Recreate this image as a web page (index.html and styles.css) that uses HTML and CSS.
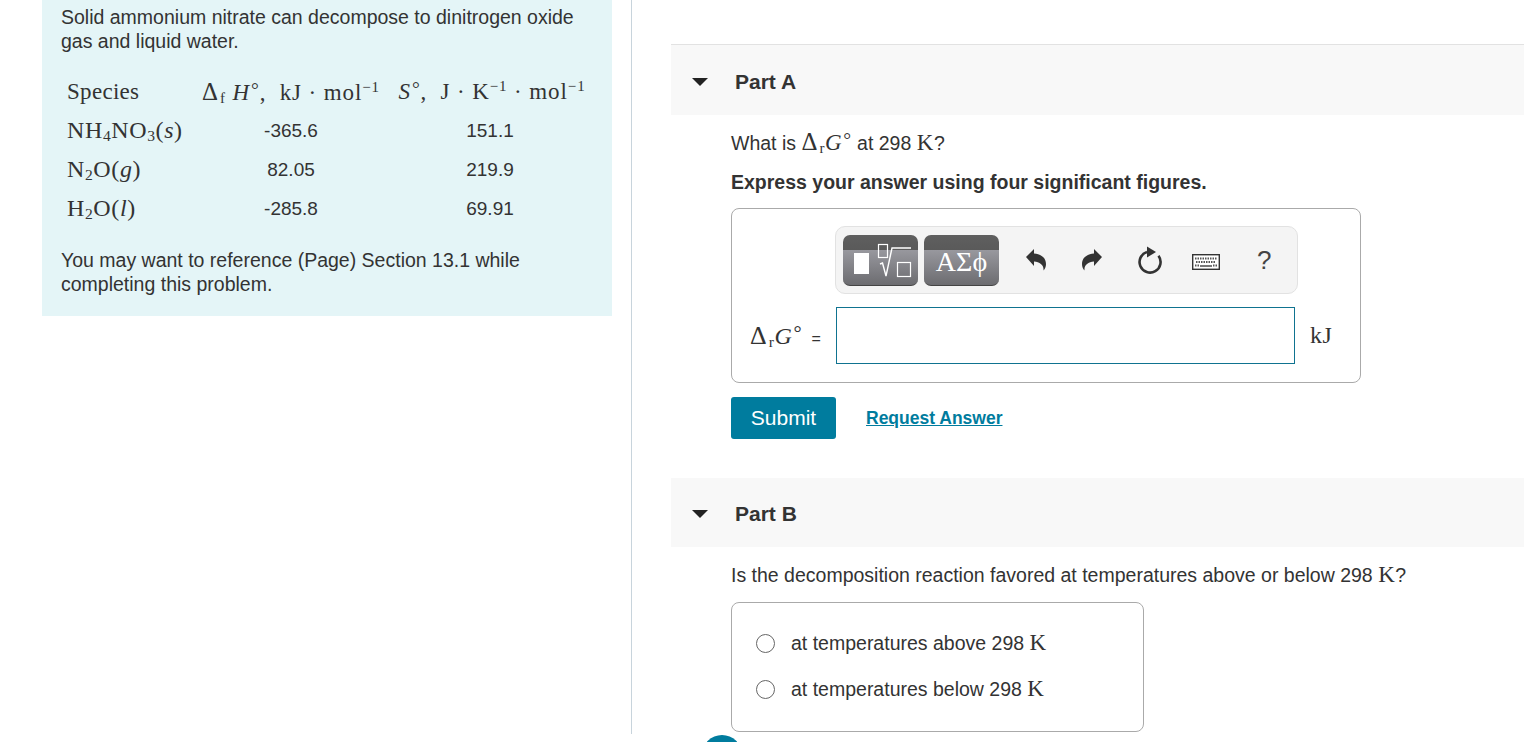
FILE: index.html
```html
<!DOCTYPE html>
<html lang="en">
  <head>
    <meta charset="UTF-8" />
    <meta name="viewport" content="width=device-width, initial-scale=1.0" />
    <title>Part A</title>
    <link rel="stylesheet" href="styles.css">
  </head>
  <body>
    <div class="page">
      <div class="left-col">
        <div class="intro">
          <p class="intro-text">Solid ammonium nitrate can decompose to dinitrogen oxide gas and liquid water.</p>
          <table class="data-table">
            <tr class="head-row">
              <th class="species math">Species</th>
              <th class="col-h math"><span class="delta">&Delta;</span><sub>f</sub> <i>H</i><sup class="deg">&deg;</sup>, &nbsp;kJ &middot; mol<sup>&minus;1</sup></th>
              <th class="col-s math"><i>S</i><sup class="deg">&deg;</sup>, &nbsp;J &middot; K<sup>&minus;1</sup> &middot; mol<sup>&minus;1</sup></th>
            </tr>
            <tr>
              <td class="species math">NH<sub>4</sub>NO<sub>3</sub>(<i>s</i>)</td>
              <td class="col-h">-365.6</td>
              <td class="col-s">151.1</td>
            </tr>
            <tr>
              <td class="species math">N<sub>2</sub>O(<i>g</i>)</td>
              <td class="col-h">82.05</td>
              <td class="col-s">219.9</td>
            </tr>
            <tr>
              <td class="species math">H<sub>2</sub>O(<i>l</i>)</td>
              <td class="col-h">-285.8</td>
              <td class="col-s">69.91</td>
            </tr>
          </table>
          <p class="intro-text">You may want to reference (Page) Section 13.1 while completing this problem.</p>
        </div>
      </div>

      <div class="right-col">
        <div class="part-head first">
          <span class="caret"></span>
          <h3>Part A</h3>
        </div>
        <div class="part-body">
          <p class="question">What is <span class="math"><span class="delta">&Delta;</span><sub>r</sub><i>G</i><sup class="deg">&deg;</sup></span> at 298 <span class="math">K</span>?</p>
          <p class="instruction">Express your answer using four significant figures.</p>

          <div class="answer-box">
            <div class="toolbar">
              <button class="tpl-btn" type="button">
                <span class="block"></span>
                <svg width="40" height="40" viewBox="0 0 40 40" fill="none" stroke="#fff" stroke-width="1.200">
                  <rect x="5.500" y="3.500" width="9" height="13" />
                  <path d="M7 23l2.500-1L13 35l6-28h19" stroke-width="1.400" />
                  <rect x="24.500" y="21.500" width="13" height="14" />
                </svg>
              </button>
              <button class="tpl-btn greek" type="button">&Alpha;&Sigma;&#981;</button>
              <div class="tools">
                <svg class="tool" width="22" height="24" viewBox="0 0 22 24"><path fill="#333" d="M1 9l8-8v4.500C15 6 21 9 21 16c0 3-1 5-2.500 6.500C19 17 15 14 9 13.500V18z" /></svg>
                <svg class="tool" width="22" height="24" viewBox="0 0 22 24"><path fill="#333" d="M21 9l-8-8v4.500C7 6 1 9 1 16c0 3 1 5 2.500 6.500C3 17 7 14 13 13.500V18z" /></svg>
                <svg class="tool" width="26" height="28" viewBox="0 0 26 28" fill="none"><path stroke="#333" stroke-width="2.600" d="M10 6A10.500 10.500 0 1 0 21.500 9.800" /><path fill="#333" d="M10 .5 19 6l-9 5.500z" /></svg>
                <svg class="tool kbd" width="28" height="16" viewBox="0 0 28 16" fill="none">
                  <rect x=".7" y=".7" width="26.600" height="14.600" fill="#fff" stroke="#333" stroke-width="1.400" />
                  <path stroke="#555" stroke-width="2" stroke-dasharray="1.500 1" d="M3 4.500h22M4 8h20M3 11.500h4M21 11.500h4" />
                  <path stroke="#555" stroke-width="1.600" d="M8 12h12" />
                </svg>
                <span class="tool help">?</span>
              </div>
            </div>
            <div class="answer-row">
              <span class="answer-label"><span class="math"><span class="delta">&Delta;</span><sub>r</sub><i>G</i><sup class="deg">&deg;</sup></span> =</span>
              <input class="answer-input" type="text" />
              <span class="unit math">kJ</span>
            </div>
          </div>

          <div class="actions">
            <button class="submit" type="button">Submit</button>
            <a class="request-link" href="#">Request Answer</a>
          </div>
        </div>

        <div class="part-head second">
          <span class="caret"></span>
          <h3>Part B</h3>
        </div>
        <div class="part-body">
          <p class="question lower">Is the decomposition reaction favored at temperatures above or below 298 <span class="math">K</span>?</p>
          <div class="choices">
            <label class="choice"><span class="radio"></span>at temperatures above 298&nbsp;<span class="math">K</span></label>
            <label class="choice"><span class="radio"></span>at temperatures below 298&nbsp;<span class="math">K</span></label>
          </div>
          <div class="round-btn"></div>
        </div>
      </div>
    </div>
  </body>
</html>
```

FILE: styles.css
```css
html,
body {
  height: 742px;
  overflow: hidden;
}
body {
  font-family: "Liberation Sans", Arial, sans-serif;
  font-size: 19.5px;
  margin: 0;
  padding: 0;
  background-color: #ffffff;
  color: #333333;
}
.page {
  display: flex;
  height: 742px;
  overflow: hidden;
}
.left-col {
  width: 632px;
  height: 734px;
  box-sizing: border-box;
  padding-left: 42px;
  padding-right: 19px;
  border-right: 1px solid #c8d4dc;
  flex-shrink: 0;
}
.intro {
  background: #e4f5f7;
  height: 316px;
  box-sizing: border-box;
  padding: 5px 19px 0;
}
.intro-text {
  margin: 0;
  line-height: 24px;
}
.math {
  font-family: "Liberation Serif", "Times New Roman", serif;
  letter-spacing: 0.6px;
}
.math sub,
.math sup {
  font-size: 65%;
  line-height: 0;
}
.math sub {
  vertical-align: -3px;
}
.math sup {
  vertical-align: 8px;
}
.math .deg {
  font-size: 85%;
  vertical-align: 4px;
  margin-left: 1px;
}
.delta {
  letter-spacing: 2px;
  font-size: 108%;
}
.data-table {
  border-collapse: collapse;
  table-layout: fixed;
  margin: 15px 0 20px 6px;
}
.data-table th {
  font-weight: normal;
  font-size: 23px;
  padding: 4px 0 0;
  height: 39px;
  white-space: nowrap;
  letter-spacing: 0.9px;
}
.data-table td {
  text-align: center;
  height: 39px;
  padding: 0;
  font-size: 19px;
}
.data-table .species {
  text-align: left;
  width: 134px;
  font-size: 24px;
}
.data-table th.species {
  font-size: 23px;
  letter-spacing: 0.3px;
}
.data-table .col-h {
  width: 180px;
  padding-right: 13px;
}
.data-table .col-s {
  width: 192px;
}
.data-table td.col-s {
  padding-right: 4px;
}
.right-col {
  flex: 1;
  padding-left: 39px;
  padding-right: 6px;
  min-width: 0;
}
.part-head {
  display: flex;
  align-items: center;
  background: #f8f8f8;
  height: 69px;
  padding-left: 21px;
}
.part-head.first {
  margin-top: 44px;
  border-top: 1px solid #e2e2e2;
  height: 71px;
  box-sizing: border-box;
}
.part-head.second {
  margin-top: 39px;
}
.part-head h3 {
  margin: 4px 0 0 27px;
  font-size: 21px;
  line-height: 24px;
}
.part-head.second h3 {
  margin-top: 2px;
}
.caret {
  width: 0;
  height: 0;
  border-left: 8px solid transparent;
  border-right: 8px solid transparent;
  border-top: 8px solid #222222;
  margin-top: 4px;
}
.part-head.second .caret {
  margin-top: 2px;
}
.part-body {
  padding-left: 60px;
}
.question {
  margin: 0;
  padding-top: 15px;
  line-height: 24px;
}
.question.lower {
  padding-top: 16px;
}
.question .math,
.choices .math {
  font-size: 23px;
}
.instruction {
  margin: 15px 0 14px;
  font-weight: bold;
  line-height: 24px;
}
.answer-box {
  width: 630px;
  height: 175px;
  box-sizing: border-box;
  border: 1px solid #aaaaaa;
  border-radius: 8px;
  padding: 17px 0 0 18px;
}
.toolbar {
  display: flex;
  align-items: center;
  width: 463px;
  height: 68px;
  box-sizing: border-box;
  margin-left: 85px;
  padding-left: 7px;
  gap: 6px;
  background: #f4f4f4;
  border: 1px solid #e2e2e2;
  border-radius: 10px;
}
.tpl-btn {
  display: flex;
  align-items: center;
  gap: 4px;
  width: 75px;
  height: 51px;
  padding: 0 0 0 11px;
  border: none;
  border-bottom: 1px solid #444444;
  border-radius: 7px;
  color: #ffffff;
  background: linear-gradient(#5f5f5f 0, #5a5a5a 29%, #98989e 30%, #6c6c70 100%);
}
.tpl-btn .block {
  width: 15px;
  height: 21px;
  background: #ffffff;
  margin-top: 7px;
}
.tpl-btn svg {
  margin-top: 2px;
}
.greek {
  justify-content: center;
  padding: 4px 0 0;
  font-family: "Liberation Serif", serif;
  font-size: 28px;
}
.tools {
  display: flex;
  align-items: center;
  margin-left: 20px;
  gap: 34px;
}
.tool {
  display: block;
  flex-shrink: 0;
}
.kbd {
  margin-left: -5px;
  margin-top: 4px;
}
.help {
  margin-left: 3px;
  font-size: 26px;
  color: #444444;
}
.answer-row {
  display: flex;
  align-items: center;
  margin-top: 13px;
}
.answer-label {
  width: 86px;
  flex-shrink: 0;
  font-size: 16px;
}
.answer-label .math {
  font-size: 24px;
  margin-right: 5px;
}
.answer-input {
  width: 459px;
  height: 57px;
  box-sizing: border-box;
  border: 1px solid #0f7390;
  margin: 0;
  padding: 0;
  outline: none;
}
.unit {
  margin-left: 15px;
  font-size: 24px;
}
.actions {
  display: flex;
  align-items: center;
  margin-top: 14px;
}
.submit {
  width: 105px;
  height: 42px;
  border: none;
  border-radius: 3px;
  background-color: #007c9e;
  color: #ffffff;
  font-family: "Liberation Sans", Arial, sans-serif;
  font-size: 21px;
  padding: 0;
}
.request-link {
  margin-left: 30px;
  color: #007c9e;
  font-weight: bold;
  font-size: 17.5px;
}
.choices {
  width: 413px;
  height: 130px;
  box-sizing: border-box;
  border: 1px solid #aaaaaa;
  border-radius: 8px;
  margin-top: 15px;
  padding: 17px 0 0 24px;
}
.choice {
  display: flex;
  align-items: center;
  height: 46px;
}
.radio {
  width: 19px;
  height: 19px;
  box-sizing: border-box;
  border: 1px solid #666666;
  border-radius: 50%;
  margin-right: 16px;
}
.round-btn {
  width: 40px;
  height: 40px;
  border-radius: 50%;
  background: #007c9e;
  margin: 3px 0 0 -29px;
}
```
